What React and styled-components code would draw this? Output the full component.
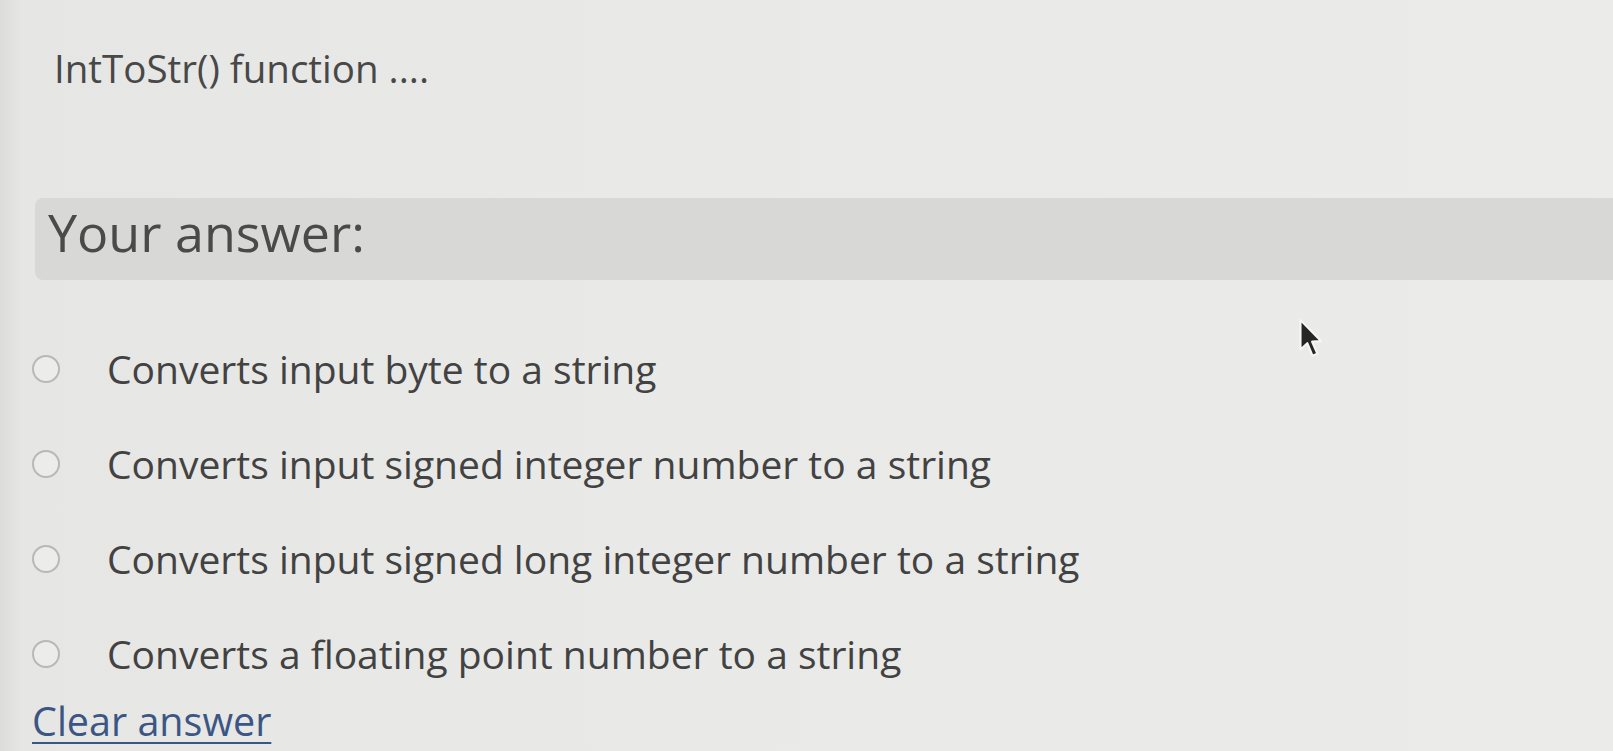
import React from "react";
import styled, { createGlobalStyle } from "styled-components";

const Global = createGlobalStyle`
  html, body { margin: 0; padding: 0; }
  body {
    width: 1613px; height: 751px; overflow: hidden;
    background: linear-gradient(90deg, #dcdcdb 0px, #e6e6e4 22px, #e9e9e7 40%, #ebebe9 100%);
    font-family: "Open Sans", "Noto Sans", sans-serif;
    color: #454545;
  }
`;

const Page = styled.div`
  position: relative;
  height: 751px;
  padding-top: 42px;
  box-sizing: border-box;
  display: flex;
  flex-direction: column;
`;

const Question = styled.div`
  padding-left: 54px;
  font-size: 38.5px;
  line-height: 52px;
  color: #484848;
`;

const Band = styled.div`
  margin: 104px 0 0 35px;
  height: 82px;
  box-sizing: border-box;
  padding: 0 0 16px 13px;
  background: #d8d8d7;
  border-radius: 8px 0 0 8px;
  display: flex;
  align-items: center;
  font-size: 52px;
  color: #4a4a4a;
`;

const Options = styled.div`
  display: flex;
  flex-direction: column;
  gap: 43px;
  margin-top: 63px;
  padding-left: 32px;
`;

const Option = styled.label`
  display: flex;
  align-items: center;
  gap: 47px;
  font-size: 39px;
  line-height: 52px;
  color: #424242;
`;

const Radio = styled.span`
  width: 28px;
  height: 28px;
  box-sizing: border-box;
  border-radius: 50%;
  border: 2px solid #b8b8b7;
  background: #ececeb;
  flex: none;
`;

const Clear = styled.a`
  margin: 17px 0 0 32px;
  font-size: 39.5px;
  line-height: 48px;
  color: #3b5684;
  text-decoration: underline;
  text-underline-offset: 6px;
  text-decoration-thickness: 2px;
  width: max-content;
`;

const Cursor = styled.svg`
  position: absolute;
  left: 1298px;
  top: 318px;
`;

const items = [
  "Converts input byte to a string",
  "Converts input signed integer number to a string",
  "Converts input signed long integer number to a string",
  "Converts a floating point number to a string",
];

export default function App() {
  return (
    <>
      <Global />
      <Page>
        <Question>IntToStr() function ....</Question>
        <Band>Your answer:</Band>
        <Options>
          {items.map((t) => (
            <Option key={t}>
              <Radio />
              {t}
            </Option>
          ))}
        </Options>
        <Clear href="#">Clear answer</Clear>
        <Cursor width="26" height="42" viewBox="0 0 24 40">
          <path d="M2 2 L2 30 L8.5 24 L13.5 36 L18 34 L13 22.5 L21.5 22 Z" fill="#262626" stroke="#f6f6f6" strokeWidth="2" strokeLinejoin="round" />
        </Cursor>
      </Page>
    </>
  );
}
